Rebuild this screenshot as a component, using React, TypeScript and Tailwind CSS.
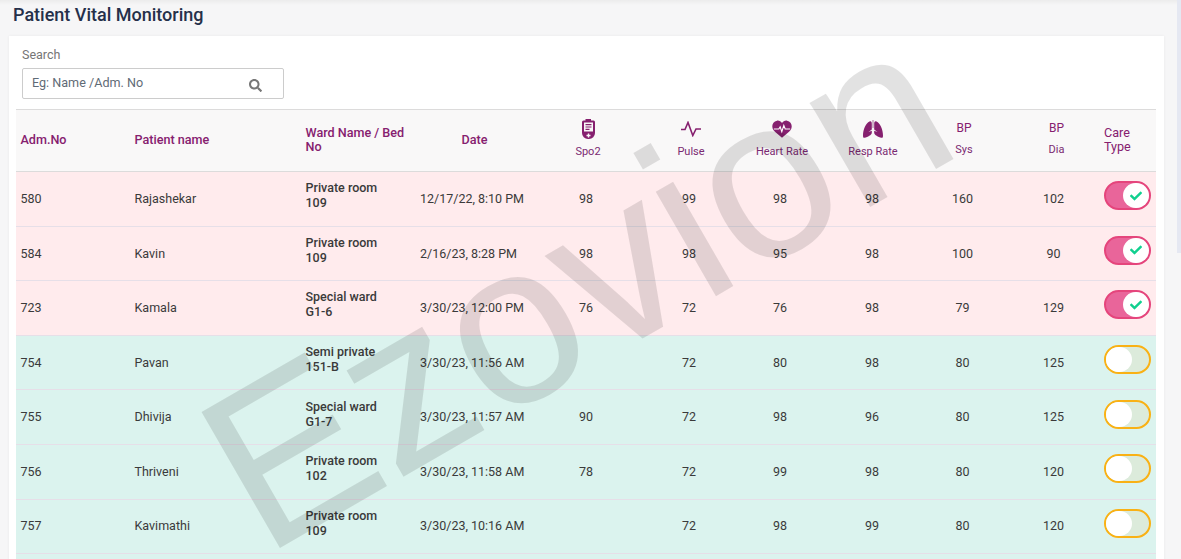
import { FaCheck, FaSearch } from "react-icons/fa";

const font = { fontFamily: "Roboto, sans-serif" };

type Row = { adm: string; name: string; ward: string; bed: string; date: string; spo2: string; pulse: string; heart: string; resp: string; sys: string; dia: string; on: boolean };

const rows: Row[] = [
  { adm: "580", name: "Rajashekar", ward: "Private room", bed: "109", date: "12/17/22, 8:10 PM", spo2: "98", pulse: "99", heart: "98", resp: "98", sys: "160", dia: "102", on: true },
  { adm: "584", name: "Kavin", ward: "Private room", bed: "109", date: "2/16/23, 8:28 PM", spo2: "98", pulse: "98", heart: "95", resp: "98", sys: "100", dia: "90", on: true },
  { adm: "723", name: "Kamala", ward: "Special ward", bed: "G1-6", date: "3/30/23, 12:00 PM", spo2: "76", pulse: "72", heart: "76", resp: "98", sys: "79", dia: "129", on: true },
  { adm: "754", name: "Pavan", ward: "Semi private", bed: "151-B", date: "3/30/23, 11:56 AM", spo2: "", pulse: "72", heart: "80", resp: "98", sys: "80", dia: "125", on: false },
  { adm: "755", name: "Dhivija", ward: "Special ward", bed: "G1-7", date: "3/30/23, 11:57 AM", spo2: "90", pulse: "72", heart: "98", resp: "96", sys: "80", dia: "125", on: false },
  { adm: "756", name: "Thriveni", ward: "Private room", bed: "102", date: "3/30/23, 11:58 AM", spo2: "78", pulse: "72", heart: "99", resp: "98", sys: "80", dia: "120", on: false },
  { adm: "757", name: "Kavimathi", ward: "Private room", bed: "109", date: "3/30/23, 10:16 AM", spo2: "", pulse: "72", heart: "98", resp: "99", sys: "80", dia: "120", on: false },
];

function Spo2Icon() {
  return (
    <svg width="13" height="20" viewBox="0 0 13 20" className="mx-auto">
      <path fill="#86206f" fillRule="evenodd" d="M3.500 0H9V1.500H11.500A1.500 1.500 0 0 1 13 3V14A6 6 0 0 1 7 20H6A6 6 0 0 1 0 14V3A1.500 1.500 0 0 1 1.500 1.500H3.500ZM2 3.500V12.500H11V3.500ZM5.800 14.500V15.800H4.500V17.200H5.800V18.500H7.200V17.200H8.500V15.800H7.200V14.500Z" />
      <path fill="#86206f" d="M3.500 5H9.500V6.200H3.500ZM3.500 7.400H9.500V8.600H3.500ZM3.500 9.800H7.500V11H3.500Z" />
    </svg>
  );
}

function PulseIcon() {
  return (
    <svg width="20" height="16" viewBox="0 0 20 16" className="mx-auto" fill="none" stroke="#86206f" strokeWidth="1.600">
      <path d="M0 8.500H4L7 1.500L11.800 14.500L15 8H20" />
    </svg>
  );
}

function HeartIcon() {
  return (
    <svg width="20" height="18" viewBox="0 0 22 19" className="mx-auto">
      <path fill="#86206f" d="M11 19C7 15.500 3.500 13 1.500 10.500C-1 6.500 0.500 1 5.500 0.300C7.800 0 9.800 1 11 3C12.200 1 14.200 0 16.500 0.300C21.500 1 23 6.500 20.500 10.500C18.500 13 15 15.500 11 19Z" />
      <path fill="none" stroke="#fff" strokeWidth="1.200" d="M2 9.500H7.500L9 7L10.800 12.500L13 5.500L14.500 9.500H20" />
    </svg>
  );
}

function LungsIcon() {
  return (
    <svg width="20" height="18" viewBox="0 0 20 18" className="mx-auto">
      <path fill="#86206f" d="M6.500 1.500C8.200 0.800 8.800 2 8.800 4V9.500L5.500 12L8.800 10.800V13C8.500 15 5 17 1.500 17.800C0.300 18 0 17.200 0 15.500C0 9.500 3 3 6.500 1.500Z" />
      <path fill="#86206f" d="M13.500 1.500C11.800 0.800 11.200 2 11.200 4V9.500L14.500 12L11.200 10.800V13C11.500 15 15 17 18.500 17.800C19.700 18 20 17.200 20 15.500C20 9.500 17 3 13.500 1.500Z" />
      <rect x="9.400" y="0" width="1.200" height="8" fill="#b78aac" />
    </svg>
  );
}

function Toggle({ on }: { on: boolean }) {
  return on ? (
    <div className="mt-[-6px] flex h-[29px] w-[47px] items-center justify-end rounded-full border-2 border-[#e5457c] bg-[#e9659a]">
      <div className="flex h-[25px] w-[26px] items-center justify-center rounded-full bg-white">
        <FaCheck className="text-[12px] text-[#10d08f]" />
      </div>
    </div>
  ) : (
    <div className="mt-[-6px] flex h-[29px] w-[47px] items-center justify-start rounded-full border-2 border-[#f9b115] bg-[#dcebdb]">
      <div className="h-[25px] w-[26px] rounded-full bg-white" />
    </div>
  );
}

function HeadCell({ icon, label, cls }: { icon: React.ReactNode; label: string; cls?: string }) {
  return (
    <th className={`p-0 pb-[4px] text-center align-middle font-normal ${cls ?? ""}`}>
      <div className="flex h-[20px] items-center justify-center">{icon}</div>
      <div className="mt-[6px] text-[11px] leading-[14px] text-[#7b2a72]">{label}</div>
    </th>
  );
}

function BpCell({ label, cls }: { label: string; cls?: string }) {
  return (
    <th className={`p-0 pb-[4px] text-center align-middle font-normal ${cls ?? ""}`}>
      <div className="text-[12px] leading-[16px] text-[#86206f]">BP</div>
      <div className="mt-[7px] text-[11px] leading-[14px] text-[#7b2a72]">{label}</div>
    </th>
  );
}

export default function App() {
  return (
    <div className="relative h-[559px] w-[1181px] overflow-hidden bg-[#f6f6f7] text-[#3a3a3a]" style={font}>
      <div className="absolute left-0 top-0 h-[5px] w-full bg-gradient-to-b from-[#ececec] to-[#f6f6f7]" />
      <div className="absolute right-0 top-0 h-[253px] w-[4px] bg-[#e5e8f2]" />
      <h1 className="relative px-[13px] pt-[4px] text-[18px] font-medium leading-[22px] text-[#25304a]">Patient Vital Monitoring</h1>
      <div className="ml-[9px] mt-[10px] w-[1155px] bg-white shadow-[0_0_3px_rgba(0,0,0,0.06)]">
        <div className="h-[73px] px-[13px] pt-[11px]">
          <label className="block text-[12.5px] leading-[15px] text-[#757575]">Search</label>
          <div className="mt-[6px] flex h-[31px] w-[262px] items-center justify-between rounded-[2px] border border-[#cccccc] pl-[9px] pr-[21px]">
            <span className="text-[12.6px] text-[#5f6b76]">Eg: Name /Adm. No</span>
            <FaSearch className="mt-[3px] text-[13px] text-[#777777]" />
          </div>
        </div>
        <div className="mx-[7px] w-[1140px]">
          <table className="w-[1140px] table-fixed border-collapse">
            <colgroup>
              <col className="w-[114px]" />
              <col className="w-[171px]" />
              <col className="w-[115px]" />
              <col className="w-[119px]" />
              <col className="w-[102px]" />
              <col className="w-[106px]" />
              <col className="w-[78px]" />
              <col className="w-[105px]" />
              <col className="w-[76px]" />
              <col className="w-[99px]" />
              <col className="w-[55px]" />
            </colgroup>
            <thead>
              <tr className="h-[62px] border-y border-y-[#dcdbdb] bg-[#f9f8f8] text-[12.6px] text-[#86206f]">
                <th className="pl-[4.5px] text-left font-medium">Adm.No</th>
                <th className="pl-[4.5px] text-left font-medium">Patient name</th>
                <th className="pb-[2px] pl-[4.5px] text-left font-medium leading-[14px]">Ward Name / Bed No</th>
                <th className="pr-[2px] text-center font-medium">Date</th>
                <HeadCell icon={<Spo2Icon />} label="Spo2" cls="pl-[4px]" />
                <HeadCell icon={<PulseIcon />} label="Pulse" cls="pl-[2px]" />
                <HeadCell icon={<HeartIcon />} label="Heart Rate" />
                <HeadCell icon={<LungsIcon />} label="Resp Rate" cls="pr-[1px]" />
                <BpCell label="Sys" />
                <BpCell label="Dia" cls="pl-[10px]" />
                <th className="pb-[2px] pl-[3px] text-left font-normal leading-[14px]">Care Type</th>
              </tr>
            </thead>
            <tbody className="text-[12.5px]">
              {rows.map((r) => (
                <tr key={r.adm} className={`h-[54.6px] border-b border-b-[#e6dfe8] ${r.on ? "bg-[#ffebed]" : "bg-[#dbf3ee]"}`}>
                  <td className="pl-[4.5px] pt-[1px]">{r.adm}</td>
                  <td className="pl-[4.5px] pt-[1px]">{r.name}</td>
                  <td className="pb-[7px] pl-[4.5px] font-medium leading-[15px]">
                    <div>{r.ward}</div>
                    <div>{r.bed}</div>
                  </td>
                  <td className="pl-[4px] pt-[1px]">{r.date}</td>
                  <td className="pt-[1px] text-center">{r.spo2}</td>
                  <td className="pr-[2px] pt-[1px] text-center">{r.pulse}</td>
                  <td className="pr-[4px] pt-[1px] text-center">{r.heart}</td>
                  <td className="pr-[3px] pt-[1px] text-center">{r.resp}</td>
                  <td className="pr-[3px] pt-[1px] text-center">{r.sys}</td>
                  <td className="pl-[4px] pt-[1px] text-center">{r.dia}</td>
                  <td className="pl-[3px]"><Toggle on={r.on} /></td>
                </tr>
              ))}
              <tr className="h-[54.6px] bg-[#dbf3ee]"><td colSpan={11} /></tr>
            </tbody>
          </table>
        </div>
      </div>
      <div
        className="pointer-events-none absolute left-[170px] top-[170px] origin-center -rotate-[30deg] whitespace-nowrap text-[228px] leading-[232px] text-[rgba(0,0,0,0.115)]"
        style={{ fontFamily: '"Liberation Sans", sans-serif' }}
      >
        Ezovion
      </div>
    </div>
  );
}
